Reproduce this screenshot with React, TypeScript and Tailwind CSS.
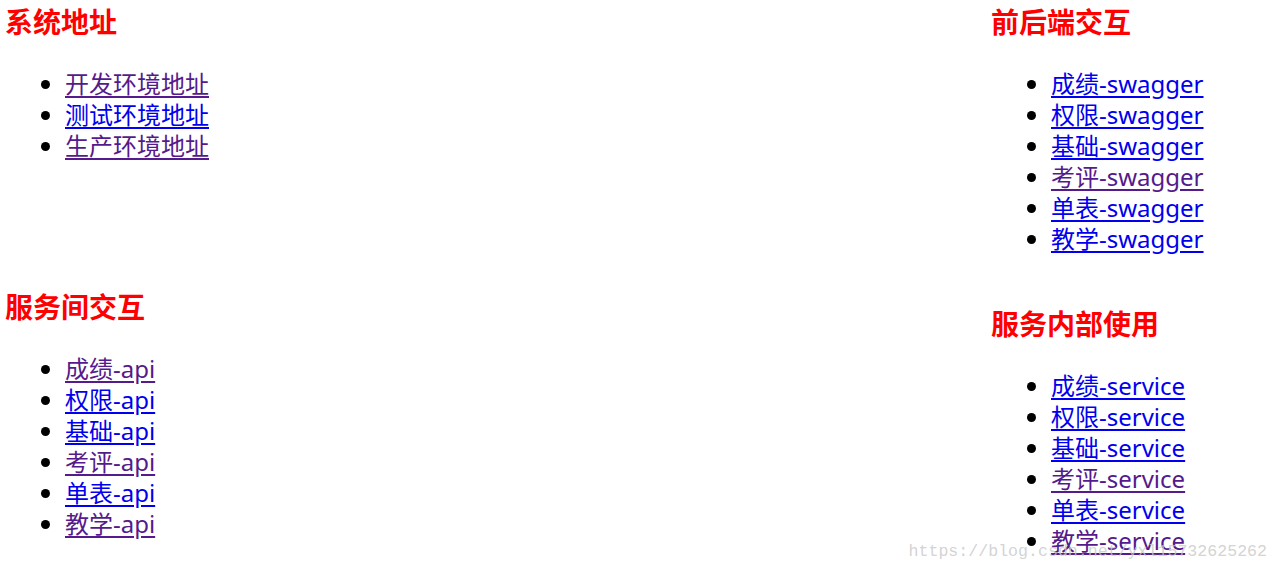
import React from "react";

type LinkItem = { label: string; visited?: boolean };

type Section = { title: string; items: LinkItem[]; gap: string };

const leftSections: Section[] = [
  {
    title: "系统地址",
    gap: "mt-[7px]",
    items: [
      { label: "开发环境地址", visited: true },
      { label: "测试环境地址" },
      { label: "生产环境地址", visited: true },
    ],
  },
  {
    title: "服务间交互",
    gap: "mt-[131px]",
    items: [
      { label: "成绩-api", visited: true },
      { label: "权限-api" },
      { label: "基础-api" },
      { label: "考评-api", visited: true },
      { label: "单表-api" },
      { label: "教学-api", visited: true },
    ],
  },
];

const rightSections: Section[] = [
  {
    title: "前后端交互",
    gap: "mt-[7px]",
    items: [
      { label: "成绩-swagger" },
      { label: "权限-swagger" },
      { label: "基础-swagger" },
      { label: "考评-swagger", visited: true },
      { label: "单表-swagger" },
      { label: "教学-swagger" },
    ],
  },
  {
    title: "服务内部使用",
    gap: "mt-[55px]",
    items: [
      { label: "成绩-service" },
      { label: "权限-service" },
      { label: "基础-service" },
      { label: "考评-service", visited: true },
      { label: "单表-service" },
      { label: "教学-service", visited: true },
    ],
  },
];

function LinkSection({ section }: { section: Section }) {
  return (
    <div className={section.gap}>
      <h2 className="text-[28px] leading-[30px] font-bold text-[#ff0000]">{section.title}</h2>
      <ul className="mt-[31px] list-disc pl-[60px] text-[24px] leading-[31px]">
        {section.items.map((item) => (
          <li key={item.label}>
            <a
              href="#"
              className={`underline underline-offset-[3px] ${item.visited ? "text-[#551a8b]" : "text-[#0000ee]"}`}
            >
              {item.label}
            </a>
          </li>
        ))}
      </ul>
    </div>
  );
}

export default function App() {
  return (
    <div
      className="relative h-[573px] w-full overflow-hidden bg-white text-black"
      style={{ fontFamily: '"Noto Sans", "Noto Sans CJK SC", sans-serif' }}
    >
      <div className="grid grid-cols-[986px_1fr] pl-[5px]">
        <div>
          {leftSections.map((s) => (
            <LinkSection key={s.title} section={s} />
          ))}
        </div>
        <div>
          {rightSections.map((s) => (
            <LinkSection key={s.title} section={s} />
          ))}
        </div>
      </div>

      {/* blog watermark */}
      <div className="pointer-events-none absolute right-[11px] top-[541px] font-['Liberation_Mono',monospace] text-[16.6px] leading-[22px] text-[#c8c8c8]/80">
        https://blog.csdn.net/yxl15732625262
      </div>
    </div>
  );
}
